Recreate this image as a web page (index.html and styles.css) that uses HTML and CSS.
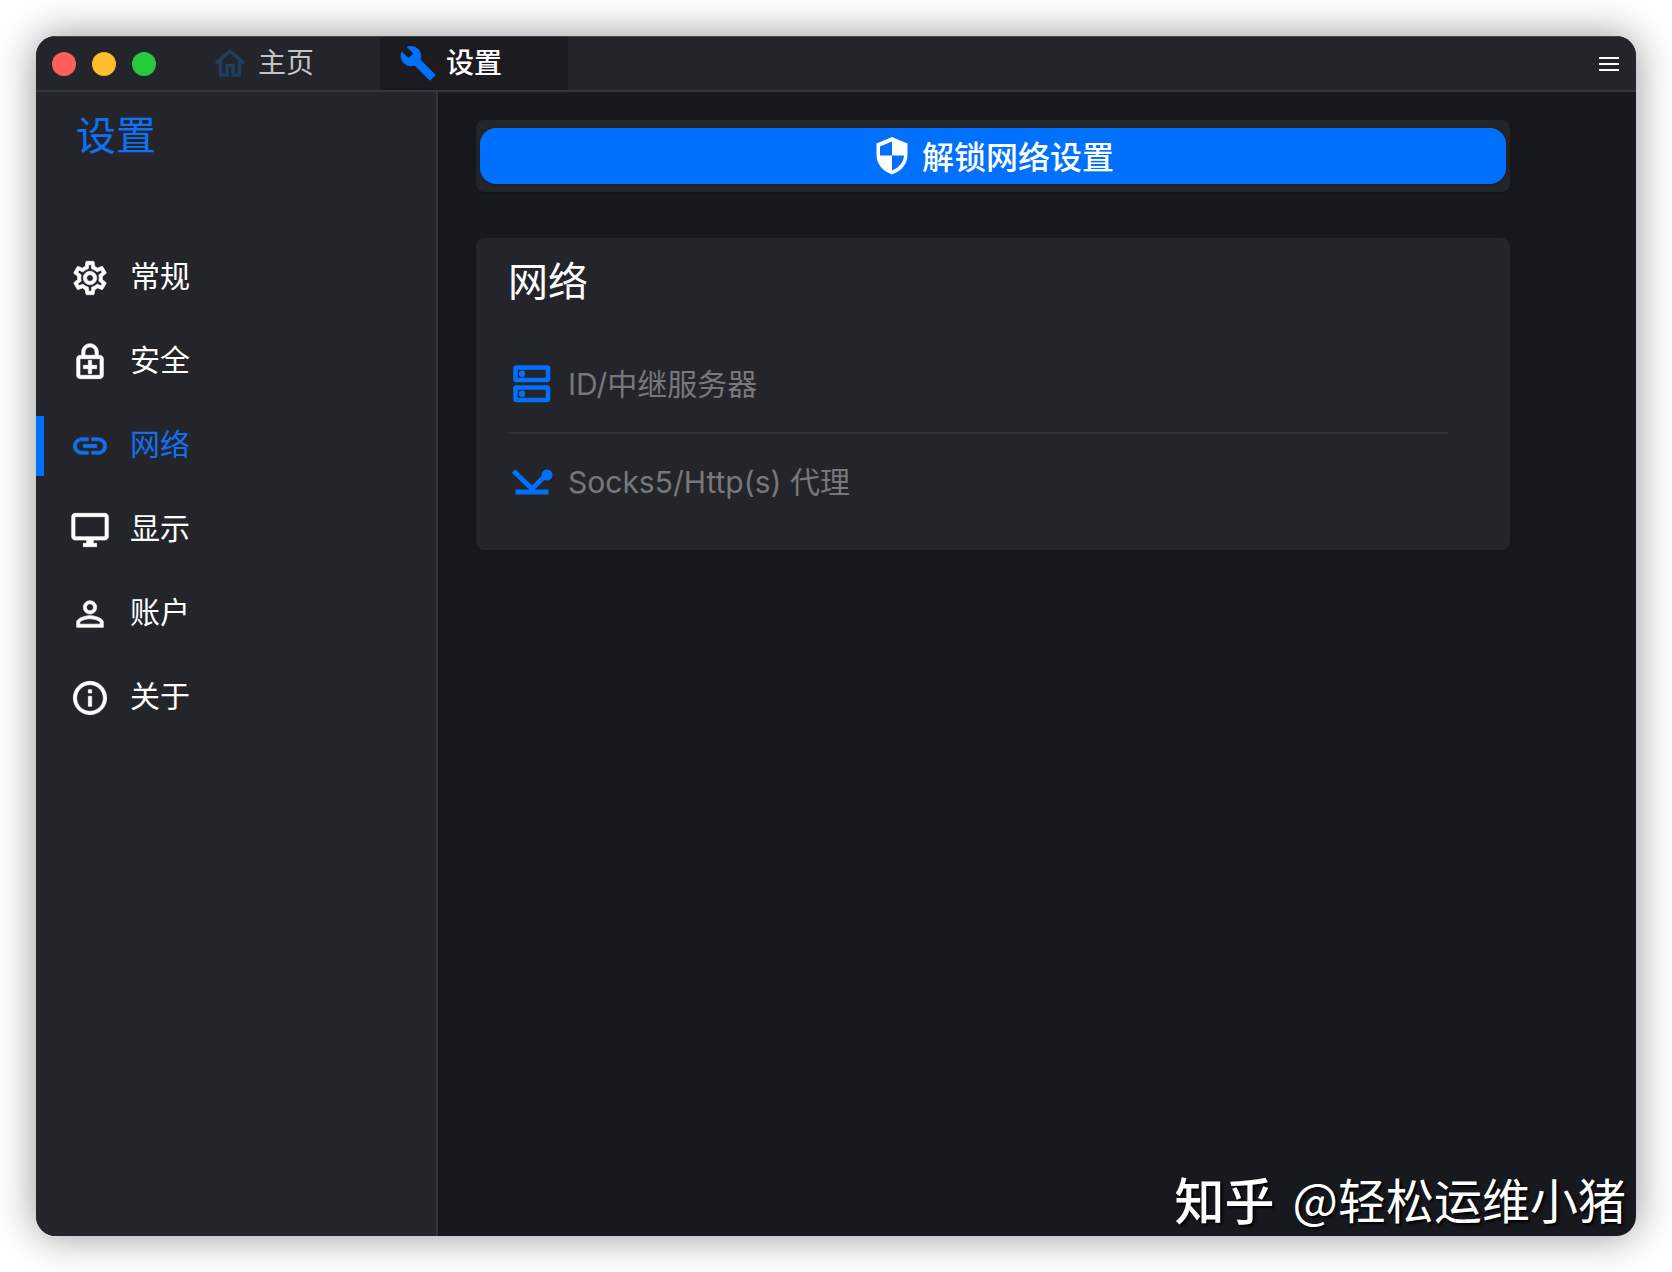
FILE: index.html
```html
<!DOCTYPE html>
<html lang="zh-CN">
<head>
<meta charset="utf-8">
<meta name="viewport" content="width=device-width, initial-scale=1">
<title>设置</title>
<link rel="stylesheet" href="styles.css">
</head>
<body>
<div class="window">
  <header class="titlebar">
    <div class="lights">
      <button class="light light-close" aria-label="关闭"></button>
      <button class="light light-minimize" aria-label="最小化"></button>
      <button class="light light-zoom" aria-label="缩放"></button>
    </div>
    <nav class="tabs">
      <button class="tab">
        <svg class="tab-icon tab-icon-home" viewBox="0 0 36 36" fill="none" stroke="currentColor" stroke-width="3.500"><path d="M4 18.500 18 6l14 12.500M8.500 15.500v14.500h6.500v-9.500h6v9.500h6.500V15.500"/></svg>
        <span>主页</span>
      </button>
      <button class="tab tab-active">
        <svg class="tab-icon" viewBox="0.500 0.500 23 23" fill="currentColor"><path d="M23.300 19.700l-9.700-9.800c.9-2.300.4-5-1.500-6.900-2-2-5-2.400-7.400-1.300L9 6 6 9 1.600 4.700C.4 7.100.9 10.100 2.900 12.100c1.900 1.900 4.600 2.400 6.900 1.500l9.800 9.700z"/></svg>
        <span>设置</span>
      </button>
    </nav>
    <button class="menu" aria-label="菜单">
      <svg viewBox="0 0 20 20" stroke="currentColor" stroke-width="2"><path d="M0 4h20M0 10h20M0 16h20"/></svg>
    </button>
  </header>

  <div class="body">
    <aside class="sidebar">
      <h1 class="sidebar-title">设置</h1>
      <nav class="sections">
        <a class="section" href="#general">
          <svg class="section-icon" viewBox="0 0 24 24" fill="currentColor"><path d="M19.430 12.980c.04-.32.07-.64.07-.98 0-.34-.03-.66-.07-.98l2.110-1.650c.19-.15.24-.42.12-.64l-2-3.460c-.09-.16-.26-.25-.44-.25-.06 0-.12.01-.17.03l-2.490 1c-.52-.4-1.080-.73-1.690-.98l-.38-2.650C14.460 2.180 14.250 2 14 2h-4c-.25 0-.46.18-.49.42l-.38 2.650c-.61.25-1.170.59-1.690.98l-2.490-1c-.06-.02-.12-.03-.18-.03-.17 0-.34.09-.43.25l-2 3.460c-.13.22-.07.49.12.64l2.110 1.650c-.04.32-.07.65-.07.98 0 .33.03.66.07.98l-2.110 1.650c-.19.15-.24.42-.12.64l2 3.460c.09.16.26.25.44.25.06 0 .12-.01.17-.03l2.490-1c.52.4 1.080.73 1.690.98l.38 2.650c.03.24.24.42.49.42h4c.25 0 .46-.18.49-.42l.38-2.650c.61-.25 1.170-.59 1.690-.98l2.490 1c.06.02.12.03.18.03.17 0 .34-.09.43-.25l2-3.460c.12-.22.07-.49-.12-.64l-2.110-1.650zm-1.980-1.710c.04.31.05.52.05.73 0 .21-.02.43-.05.73l-.14 1.130.89.7 1.080.84-.7 1.210-1.270-.51-1.040-.42-.9.68c-.43.32-.84.56-1.250.73l-1.060.43-.16 1.130-.2 1.350h-1.400l-.19-1.350-.16-1.130-1.060-.43c-.43-.18-.83-.41-1.230-.71l-.91-.7-1.060.43-1.270.51-.7-1.210 1.080-.84.89-.7-.14-1.130c-.03-.31-.05-.54-.05-.74s.02-.43.05-.73l.14-1.130-.89-.7-1.080-.84.7-1.210 1.270.51 1.040.42.9-.68c.43-.32.84-.56 1.250-.73l1.060-.43.16-1.130.2-1.350h1.390l.19 1.350.16 1.130 1.060.43c.43.18.83.41 1.230.71l.91.7 1.060-.43 1.270-.51.7 1.210-1.070.85-.89.7.14 1.130zM12 8c-2.210 0-4 1.790-4 4s1.790 4 4 4 4-1.790 4-4-1.790-4-4-4zm0 6c-1.100 0-2-.9-2-2s.9-2 2-2 2 .9 2 2-.9 2-2 2z"/></svg>
          <span>常规</span>
        </a>
        <a class="section" href="#security">
          <svg class="section-icon" viewBox="0 0 24 24" fill="currentColor"><path d="M18 8h-1V6c0-2.760-2.240-5-5-5S7 3.240 7 6v2H6c-1.100 0-2 .9-2 2v10c0 1.100.9 2 2 2h12c1.100 0 2-.9 2-2V10c0-1.100-.9-2-2-2zM9 6c0-1.660 1.340-3 3-3s3 1.340 3 3v2H9V6zm9 14H6V10h12v10zM11 19h2v-3h3v-2h-3v-3h-2v3H8v2h3z"/></svg>
          <span>安全</span>
        </a>
        <a class="section section-active" href="#network" aria-current="page">
          <svg class="section-icon" viewBox="0 0 24 24" fill="currentColor"><path d="M3.900 12c0-1.710 1.390-3.100 3.100-3.100h4V7H7c-2.760 0-5 2.240-5 5s2.240 5 5 5h4v-1.900H7c-1.710 0-3.100-1.390-3.100-3.100zM8 13h8v-2H8v2zm9-6h-4v1.900h4c1.710 0 3.100 1.390 3.100 3.100s-1.390 3.100-3.100 3.100h-4V17h4c2.760 0 5-2.240 5-5s-2.240-5-5-5z"/></svg>
          <span>网络</span>
        </a>
        <a class="section" href="#display">
          <svg class="section-icon" viewBox="0 0 24 24" fill="currentColor"><path d="M21 2H3c-1.100 0-2 .9-2 2v12c0 1.100.9 2 2 2h7v2H8v2h8v-2h-2v-2h7c1.100 0 2-.9 2-2V4c0-1.100-.9-2-2-2zm0 14H3V4h18v12z"/></svg>
          <span>显示</span>
        </a>
        <a class="section" href="#account">
          <svg class="section-icon" viewBox="0 0 24 24" fill="currentColor"><path d="M12 5.900c1.160 0 2.100.94 2.100 2.100s-.94 2.100-2.100 2.100S9.900 9.160 9.900 8s.94-2.100 2.100-2.100m0 9c2.970 0 6.100 1.460 6.100 2.100v1.100H5.900V17c0-.64 3.130-2.100 6.100-2.100M12 4C9.790 4 8 5.790 8 8s1.790 4 4 4 4-1.790 4-4-1.790-4-4-4zm0 9c-2.670 0-8 1.340-8 4v3h16v-3c0-2.660-5.330-4-8-4z"/></svg>
          <span>账户</span>
        </a>
        <a class="section" href="#about">
          <svg class="section-icon" viewBox="0 0 24 24" fill="currentColor"><path d="M11 7h2v2h-2zm0 4h2v6h-2zm1-9C6.480 2 2 6.480 2 12s4.480 10 10 10 10-4.480 10-10S17.520 2 12 2zm0 18c-4.410 0-8-3.590-8-8s3.590-8 8-8 8 3.590 8 8-3.590 8-8 8z"/></svg>
          <span>关于</span>
        </a>
      </nav>
    </aside>

    <main class="content">
      <div class="unlock">
        <button class="unlock-button">
          <svg class="unlock-icon" viewBox="0 0 40 40"><path fill="currentColor" fill-rule="evenodd" d="M20 1 35.500 7.500v11c0 9.500-6 16.500-15.500 20C10.500 35 4.500 28 4.500 18.500v-11zM20 5.500 8 10.500v9h12zM20 19.500V34.500c7-3 11.500-8 12-15z"/></svg>
          <span>解锁网络设置</span>
        </button>
      </div>

      <section class="card">
        <h2 class="card-title">网络</h2>
        <button class="option" disabled>
          <svg class="option-icon" viewBox="0 0 48 48" fill="none" stroke="currentColor" stroke-width="4.500"><rect x="7.500" y="7.500" width="32.500" height="12.500" rx="1"/><rect x="7.500" y="27.500" width="32.500" height="12.500" rx="1"/><circle cx="14" cy="13.750" r="3.200" fill="currentColor" stroke="none"/><circle cx="14" cy="33.750" r="3.200" fill="currentColor" stroke="none"/></svg>
          <span>ID/中继服务器</span>
        </button>
        <button class="option" disabled>
          <svg class="option-icon" viewBox="0 0 48 48" fill="none" stroke="currentColor" stroke-width="4.800"><path d="M5.500 13 24 31 39 16M7.500 34h33"/><circle cx="39" cy="17" r="5.500" fill="currentColor" stroke="none"/></svg>
          <span>Socks5/Http(s) 代理</span>
        </button>
      </section>
    </main>
  </div>

  <div class="watermark"><strong class="watermark-brand">知乎</strong><span>@轻松运维小猪</span></div>
</div>
</body>
</html>
```
FILE: styles.css
```css
* {
  box-sizing: border-box;
}

:root {
  --panel: #24252a;
  --canvas: #18191e;
  --line: #35363b;
  --accent: #0071ff;
}

body {
  margin: 0;
  padding: 36px;
  min-height: 100vh;
  display: flex;
  background: #fff;
  color: #fff;
  font-family: Inter, "Noto Sans CJK SC", sans-serif;
  font-size: 30px;
  line-height: 40px;
}

button {
  margin: 0;
  padding: 0;
  border: 0;
  background: none;
  color: inherit;
  font: inherit;
}

svg {
  display: block;
  flex: none;
}

.window {
  position: relative;
  flex: 1;
  min-width: 0;
  display: flex;
  flex-direction: column;
  overflow: hidden;
  border-radius: 20px;
  background: var(--canvas);
  box-shadow: 0 0 40px rgba(0, 0, 0, 0.42);
}

.titlebar {
  display: flex;
  align-items: stretch;
  height: 56px;
  border-top: 1px solid #47484c;
  border-bottom: 2px solid var(--line);
  background: var(--panel);
}

.lights {
  display: flex;
  align-items: center;
  gap: 16px;
  padding: 0 36px 0 16px;
}

.light {
  width: 24px;
  height: 24px;
  border-radius: 50%;
}

.light-close {
  background: #ff5f57;
}

.light-minimize {
  background: #febc2e;
}

.light-zoom {
  background: #28c840;
}

.tabs {
  display: flex;
}

.tab {
  display: flex;
  align-items: center;
  gap: 10px;
  width: 188px;
  padding: 0 0 2px 20px;
  color: #c4c4c6;
  font-size: 28px;
}

.tab-active {
  background: #1c1b1f;
  color: #fff;
  font-weight: 500;
}

.tab-icon {
  width: 36px;
  height: 36px;
  color: var(--accent);
}

.tab-icon-home {
  color: #1f3e60;
}

.menu {
  margin-left: auto;
  padding: 0 17px;
}

.menu svg {
  width: 20px;
  height: 20px;
}

.body {
  flex: 1;
  display: flex;
}

.sidebar {
  flex: none;
  width: 402px;
  border-right: 2px solid var(--line);
  background: var(--panel);
}

.sidebar-title {
  margin: 0;
  padding: 14px 40px 82px;
  color: #0f72f5;
  font-size: 40px;
  font-weight: 400;
  line-height: 60px;
}

.sections {
  display: flex;
  flex-direction: column;
  gap: 24px;
}

.section {
  display: flex;
  align-items: center;
  gap: 20px;
  height: 60px;
  padding-left: 26px;
  border-left: 8px solid transparent;
  color: #fff;
  text-decoration: none;
}

.section span {
  padding-bottom: 4px;
}

.section-active {
  border-left-color: var(--accent);
  color: #1470ee;
}

.section-icon {
  width: 40px;
  height: 40px;
  stroke: currentColor;
  stroke-width: 0.4;
}

.content {
  flex: 1;
  min-width: 0;
  padding: 28px 126px 28px 38px;
}

.unlock,
.card {
  border-radius: 8px;
  background: var(--panel);
  box-shadow: 0 1px 3px rgba(0, 0, 0, 0.3);
}

.unlock {
  margin-bottom: 46px;
  padding: 8px 4px;
}

.unlock-button {
  display: flex;
  align-items: center;
  justify-content: center;
  gap: 10px;
  width: 100%;
  height: 56px;
  border-radius: 16px;
  background: var(--accent);
  box-shadow: 0 1px 3px rgba(0, 0, 0, 0.3);
  font-size: 32px;
  font-weight: 500;
}

.unlock-button span {
  padding-top: 4px;
}

.unlock-icon {
  width: 40px;
  height: 40px;
}

.card {
  padding: 14px 62px 20px 32px;
}

.card-title {
  margin: 0 0 24px;
  font-size: 40px;
  font-weight: 400;
  line-height: 60px;
}

.option {
  display: flex;
  align-items: center;
  gap: 12px;
  width: 100%;
  height: 96px;
  color: #77787b;
  text-align: left;
}

.option + .option {
  height: 98px;
  border-top: 2px solid #323338;
}

.option-icon {
  width: 48px;
  height: 48px;
  color: var(--accent);
}

.watermark {
  position: absolute;
  right: 10px;
  bottom: 2px;
  display: flex;
  align-items: center;
  gap: 18px;
  font-family: "Noto Sans CJK SC", sans-serif;
  font-size: 48px;
  line-height: 72px;
  text-shadow: 2px 2px 3px #000;
}

.watermark-brand {
  font-size: 50px;
  font-weight: 500;
}
```
